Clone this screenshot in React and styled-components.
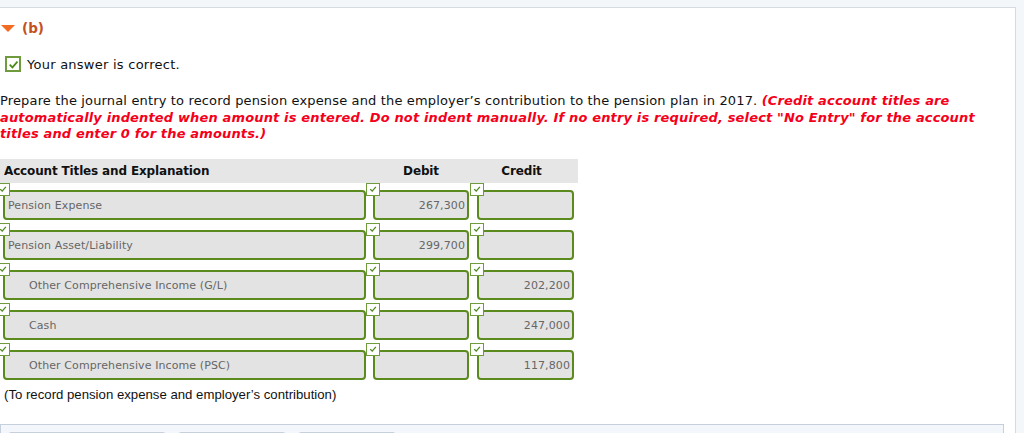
import React from 'react';
import styled, { createGlobalStyle } from 'styled-components';

const GlobalStyle = createGlobalStyle`
  html, body {
    margin: 0;
    padding: 0;
    background: #f4f7fa;
    overflow: hidden;
  }
  * {
    box-sizing: border-box;
  }
`;

const Page = styled.div`
  width: 1024px;
  height: 433px;
  padding-top: 7px;
  overflow: hidden;
  font-family: 'DejaVu Sans', Verdana, sans-serif;
`;

const Panel = styled.div`
  width: 1016px;
  height: 426px;
  background: #fff;
  border-top: 1px solid #d5dbe2;
  border-right: 1px solid #d5dbe2;
  display: flex;
  flex-direction: column;

  & > * {
    flex-shrink: 0;
  }
`;

const PartHeader = styled.div`
  display: flex;
  align-items: center;
  gap: 7px;
  margin-top: 12px;
  height: 16px;
  padding-left: 1px;
`;

const Caret = styled.span`
  width: 0;
  height: 0;
  border-left: 7.5px solid transparent;
  border-right: 7.5px solid transparent;
  border-top: 7px solid #f36b21;
`;

const PartLabel = styled.span`
  font-size: 13.5px;
  font-weight: bold;
  color: #c4511f;
  line-height: 16px;
`;

const Status = styled.div`
  display: flex;
  align-items: center;
  gap: 6px;
  margin-top: 20px;
  padding-left: 5px;
  height: 16px;
  font-size: 13px;
  letter-spacing: 0.25px;
  color: #111;
`;

const StatusBox = styled.span`
  width: 16px;
  height: 16px;
  border: 2px solid #6f9b3e;
  background: #fff;
  display: flex;
  align-items: center;
  justify-content: center;
`;

const Prompt = styled.p`
  margin: 21px 0 0 0;
  width: 990px;
  font-size: 13px;
  line-height: 16.5px;
  letter-spacing: 0.15px;
  color: #111;
`;

const Hint = styled.em`
  color: #f5001a;
  font-weight: bold;
`;

const HeaderRow = styled.div`
  margin-top: 16px;
  width: 578px;
  height: 24px;
  background: #e6e6e6;
  display: flex;
  align-items: center;
  font-size: 12px;
  letter-spacing: -0.15px;
  font-weight: bold;
  color: #111;
`;

const HeaderCell = styled.div`
  width: ${(p) => p.$w}px;
  padding-left: ${(p) => p.$pad || 0}px;
  text-align: ${(p) => p.$align || 'left'};
`;

const EntryRow = styled.div`
  display: flex;
  padding: 7px 0 3px 0;
`;

const Cell = styled.div`
  position: relative;
  width: ${(p) => p.$w}px;
  margin-left: ${(p) => p.$ml}px;
`;

const Field = styled.div`
  height: 30px;
  border: 2px solid #5b8a1f;
  border-radius: 4px;
  background: #e3e3e3;
  display: flex;
  align-items: center;
  justify-content: ${(p) => (p.$num ? 'flex-end' : 'flex-start')};
  padding: ${(p) => (p.$num ? '2px 2px 0 0' : `2px 0 0 ${p.$indent ? 24 : 3}px`)};
  font-size: 11px;
  letter-spacing: 0.1px;
  color: #666;
`;

const Tick = styled.span`
  position: absolute;
  left: -7px;
  top: -7px;
  width: 14px;
  height: 13px;
  background: #fff;
  border: 1px solid #6f9b3e;
  display: flex;
  align-items: center;
  justify-content: center;
  z-index: 2;
`;

const Note = styled.div`
  margin-top: 4px;
  padding-left: 4px;
  font-family: 'Liberation Sans', Arial, sans-serif;
  font-size: 13.2px;
  line-height: 16px;
  color: #111;
`;

const Toolbar = styled.div`
  margin-top: 21px;
  width: 1004px;
  height: 30px;
  border: 1px solid #c6cfdc;
  background: #f3f6fa;
  display: flex;
  padding: 7px 0 0 7px;
  gap: 12px;
`;

const ToolButton = styled.div`
  width: ${(p) => p.$w}px;
  height: 24px;
  border: 1px solid #c6cfdc;
  border-radius: 3px;
  background: #fff;
`;

const Check = ({ size = 8 }) => (
  <svg width={size} height={size} viewBox="0 0 10 10">
    <path d="M1.5 5.2 L4 7.6 L8.6 2.4" fill="none" stroke="#4d8a1c" strokeWidth="1.6" />
  </svg>
);

const rows = [
  { title: 'Pension Expense', debit: '267,300', credit: '' },
  { title: 'Pension Asset/Liability', debit: '299,700', credit: '' },
  { title: 'Other Comprehensive Income (G/L)', debit: '', credit: '202,200', indent: true },
  { title: 'Cash', debit: '', credit: '247,000', indent: true },
  { title: 'Other Comprehensive Income (PSC)', debit: '', credit: '117,800', indent: true },
];

const App = () => {
  return (
    <Page>
      <GlobalStyle />
      <Panel>
        <PartHeader>
          <Caret />
          <PartLabel>(b)</PartLabel>
        </PartHeader>
        <Status>
          <StatusBox>
            <Check size={11} />
          </StatusBox>
          <span>Your answer is correct.</span>
        </Status>
        <Prompt>
          Prepare the journal entry to record pension expense and the employer’s contribution to the pension plan in
          2017. <Hint>(Credit account titles are automatically indented when amount is entered. Do not indent manually. If no entry is required, select "No Entry" for the account titles and enter 0 for the amounts.)</Hint>
        </Prompt>
        <HeaderRow>
          <HeaderCell $w={373} $pad={4}>Account Titles and Explanation</HeaderCell>
          <HeaderCell $w={96} $align="center">Debit</HeaderCell>
          <HeaderCell $w={105} $align="center">Credit</HeaderCell>
        </HeaderRow>
        {rows.map((r) => (
          <EntryRow key={r.title}>
            <Cell $w={363} $ml={3}>
              <Tick><Check /></Tick>
              <Field $indent={r.indent}>{r.title}</Field>
            </Cell>
            <Cell $w={96} $ml={7}>
              <Tick><Check /></Tick>
              <Field $num>{r.debit}</Field>
            </Cell>
            <Cell $w={97} $ml={8}>
              <Tick><Check /></Tick>
              <Field $num>{r.credit}</Field>
            </Cell>
          </EntryRow>
        ))}
        <Note>(To record pension expense and employer’s contribution)</Note>
        <Toolbar>
          <ToolButton $w={158} />
          <ToolButton $w={108} />
          <ToolButton $w={98} />
        </Toolbar>
      </Panel>
    </Page>
  );
};

export default App;
